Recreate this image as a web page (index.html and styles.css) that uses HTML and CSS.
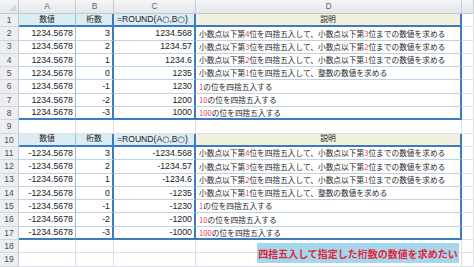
FILE: index.html
```html
<!DOCTYPE html>
<html lang="ja">
<head>
<meta charset="utf-8">
<link rel="stylesheet" href="styles.css">
</head>
<body>
<div class="sheet">
  <div class="row colhead">
    <div class="c corner"><span class="tri"></span></div>
    <div class="c ch">A</div>
    <div class="c ch">B</div>
    <div class="c ch">C</div>
    <div class="c ch">D</div>
    <div class="c ch"></div>
  </div>

  <div class="row t-head">
    <div class="c rh">1</div>
    <div class="c a hb ctr">数値</div>
    <div class="c b hb ctr">桁数</div>
    <div class="c cc hb">=ROUND(A<span class="o">○</span>,B<span class="o">○</span>)</div>
    <div class="c d hy ctr">説明</div>
    <div class="c e"></div>
  </div>
  <div class="row t-body">
    <div class="c rh">2</div>
    <div class="c a num">1234.5678</div>
    <div class="c b num">3</div>
    <div class="c cc num">1234.568</div>
    <div class="c d jp">小数点以下第<span class="r">4</span>位を四捨五入して、小数点以下第<span class="r">3</span>位までの数値を求める</div>
    <div class="c e"></div>
  </div>
  <div class="row t-body">
    <div class="c rh">3</div>
    <div class="c a num">1234.5678</div>
    <div class="c b num">2</div>
    <div class="c cc num">1234.57</div>
    <div class="c d jp">小数点以下第<span class="r">3</span>位を四捨五入して、小数点以下第<span class="r">2</span>位までの数値を求める</div>
    <div class="c e"></div>
  </div>
  <div class="row t-body">
    <div class="c rh">4</div>
    <div class="c a num">1234.5678</div>
    <div class="c b num">1</div>
    <div class="c cc num">1234.6</div>
    <div class="c d jp">小数点以下第<span class="r">2</span>位を四捨五入して、小数点以下第<span class="r">1</span>位までの数値を求める</div>
    <div class="c e"></div>
  </div>
  <div class="row t-body">
    <div class="c rh">5</div>
    <div class="c a num">1234.5678</div>
    <div class="c b num">0</div>
    <div class="c cc num">1235</div>
    <div class="c d jp">小数点以下第<span class="r">1</span>位を四捨五入して、整数の数値を求める</div>
    <div class="c e"></div>
  </div>
  <div class="row t-body">
    <div class="c rh">6</div>
    <div class="c a num">1234.5678</div>
    <div class="c b num">-1</div>
    <div class="c cc num">1230</div>
    <div class="c d jp"><span class="r">1</span>の位を四捨五入する</div>
    <div class="c e"></div>
  </div>
  <div class="row t-body">
    <div class="c rh">7</div>
    <div class="c a num">1234.5678</div>
    <div class="c b num">-2</div>
    <div class="c cc num">1200</div>
    <div class="c d jp"><span class="r">10</span>の位を四捨五入する</div>
    <div class="c e"></div>
  </div>
  <div class="row t-body t-last">
    <div class="c rh">8</div>
    <div class="c a num">1234.5678</div>
    <div class="c b num">-3</div>
    <div class="c cc num">1000</div>
    <div class="c d jp"><span class="r">100</span>の位を四捨五入する</div>
    <div class="c e"></div>
  </div>
  <div class="row">
    <div class="c rh">9</div>
    <div class="c"></div><div class="c"></div><div class="c"></div><div class="c"></div><div class="c"></div>
  </div>

  <div class="row t-head">
    <div class="c rh">10</div>
    <div class="c a hb ctr">数値</div>
    <div class="c b hb ctr">桁数</div>
    <div class="c cc hb">=ROUND(A<span class="o">○</span>,B<span class="o">○</span>)</div>
    <div class="c d hy ctr">説明</div>
    <div class="c e"></div>
  </div>
  <div class="row t-body">
    <div class="c rh">11</div>
    <div class="c a num">-1234.5678</div>
    <div class="c b num">3</div>
    <div class="c cc num">-1234.568</div>
    <div class="c d jp">小数点以下第<span class="r">4</span>位を四捨五入して、小数点以下第<span class="r">3</span>位までの数値を求める</div>
    <div class="c e"></div>
  </div>
  <div class="row t-body">
    <div class="c rh">12</div>
    <div class="c a num">-1234.5678</div>
    <div class="c b num">2</div>
    <div class="c cc num">-1234.57</div>
    <div class="c d jp">小数点以下第<span class="r">3</span>位を四捨五入して、小数点以下第<span class="r">2</span>位までの数値を求める</div>
    <div class="c e"></div>
  </div>
  <div class="row t-body">
    <div class="c rh">13</div>
    <div class="c a num">-1234.5678</div>
    <div class="c b num">1</div>
    <div class="c cc num">-1234.6</div>
    <div class="c d jp">小数点以下第<span class="r">2</span>位を四捨五入して、小数点以下第<span class="r">1</span>位までの数値を求める</div>
    <div class="c e"></div>
  </div>
  <div class="row t-body">
    <div class="c rh">14</div>
    <div class="c a num">-1234.5678</div>
    <div class="c b num">0</div>
    <div class="c cc num">-1235</div>
    <div class="c d jp">小数点以下第<span class="r">1</span>位を四捨五入して、整数の数値を求める</div>
    <div class="c e"></div>
  </div>
  <div class="row t-body">
    <div class="c rh">15</div>
    <div class="c a num">-1234.5678</div>
    <div class="c b num">-1</div>
    <div class="c cc num">-1230</div>
    <div class="c d jp"><span class="r">1</span>の位を四捨五入する</div>
    <div class="c e"></div>
  </div>
  <div class="row t-body">
    <div class="c rh">16</div>
    <div class="c a num">-1234.5678</div>
    <div class="c b num">-2</div>
    <div class="c cc num">-1200</div>
    <div class="c d jp"><span class="r">10</span>の位を四捨五入する</div>
    <div class="c e"></div>
  </div>
  <div class="row t-body t-last">
    <div class="c rh">17</div>
    <div class="c a num">-1234.5678</div>
    <div class="c b num">-3</div>
    <div class="c cc num">-1000</div>
    <div class="c d jp"><span class="r">100</span>の位を四捨五入する</div>
    <div class="c e"></div>
  </div>
  <div class="row">
    <div class="c rh">18</div>
    <div class="c"></div><div class="c"></div><div class="c"></div><div class="c"></div><div class="c"></div>
  </div>
  <div class="row">
    <div class="c rh">19</div>
    <div class="c"></div><div class="c"></div><div class="c"></div><div class="c"></div><div class="c"></div>
  </div>

  <div class="banner">四捨五入して指定した桁数の数値を求めたい</div>
</div>
</body>
</html>
```

FILE: styles.css
```css
html, body {
  margin: 0;
  padding: 0;
  background: #ffffff;
}

.sheet {
  position: relative;
  width: 474px;
  height: 267px;
  overflow: hidden;
  display: flex;
  flex-direction: column;
  font-family: "Liberation Sans", "Noto Sans CJK JP", sans-serif;
  color: #222;
}

.row {
  display: grid;
  grid-template-columns: 19px 57px 38px 82px 266px 12px;
  height: 13.3px;
  flex: none;
}

.colhead {
  height: 14px;
}

.c {
  box-sizing: border-box;
  border-right: 1px solid #dde1e6;
  border-bottom: 1px solid #dde1e6;
  display: flex;
  align-items: center;
  padding: 0 2px;
  white-space: nowrap;
  overflow: hidden;
  font-size: 8.8px;
  line-height: 1;
  min-width: 0;
}

.corner {
  position: relative;
  background: linear-gradient(#f4f5f7, #e4e7eb);
  border-right: 1px solid #c3c8cf;
  border-bottom: 1px solid #c3c8cf;
}

.tri {
  position: absolute;
  right: 2px;
  bottom: 2px;
  width: 0;
  height: 0;
  border-left: 7px solid transparent;
  border-bottom: 7px solid #d3d7dc;
}

.ch {
  justify-content: center;
  background: linear-gradient(#f5f6f8, #e3e6ea);
  color: #5e6670;
  border-right: 1px solid #c9ced5;
  border-bottom: 1px solid #c3c8cf;
  font-size: 8.5px;
}

.rh {
  justify-content: center;
  background: #eceef1;
  color: #4a4f56;
  border-right: 1px solid #c3c8cf;
  border-bottom: 1px solid #d3d7dc;
  font-size: 8.5px;
  padding: 0;
}

.num {
  justify-content: flex-end;
}

.ctr {
  justify-content: center;
}

.hb {
  background: #dbedf4;
}

.hy {
  background: #f1f1dd;
}

.t-head .hb,
.t-head .hy {
  font-size: 7.8px;
}

.t-head .cc {
  font-size: 8.6px;
  padding-left: 3px;
}

.o {
  font-family: "DejaVu Sans", sans-serif;
  font-size: 8.4px;
}

.jp {
  font-family: "Noto Sans CJK JP", sans-serif;
  font-size: 7.7px;
  padding-left: 3px;
  color: #2a2a2a;
}

.r {
  color: #e8414f;
}

/* table borders */
.t-head .a,
.t-head .b,
.t-head .cc,
.t-head .d {
  border-bottom: 2px solid #3b7cc0;
}

.t-body .a,
.t-body .b,
.t-body .cc,
.t-body .d {
  border-bottom: 1px solid #bcd2ea;
}

.t-last .a,
.t-last .b,
.t-last .cc,
.t-last .d {
  border-bottom: 2px solid #3b7cc0;
}

.t-head .a,
.t-body .a {
  border-right: 1px solid #9dbbdc;
}

.t-head .b,
.t-body .b,
.t-head .cc,
.t-body .cc,
.t-head .d,
.t-body .d {
  border-right: 2px solid #3b7cc0;
}

.banner {
  position: absolute;
  left: 257px;
  top: 243px;
  width: 202px;
  height: 20px;
  background: #a6d6e9;
  color: #e3233c;
  font-family: "Noto Sans CJK JP", sans-serif;
  font-weight: 700;
  font-size: 10px;
  display: flex;
  align-items: center;
  justify-content: center;
  white-space: nowrap;
}
```
